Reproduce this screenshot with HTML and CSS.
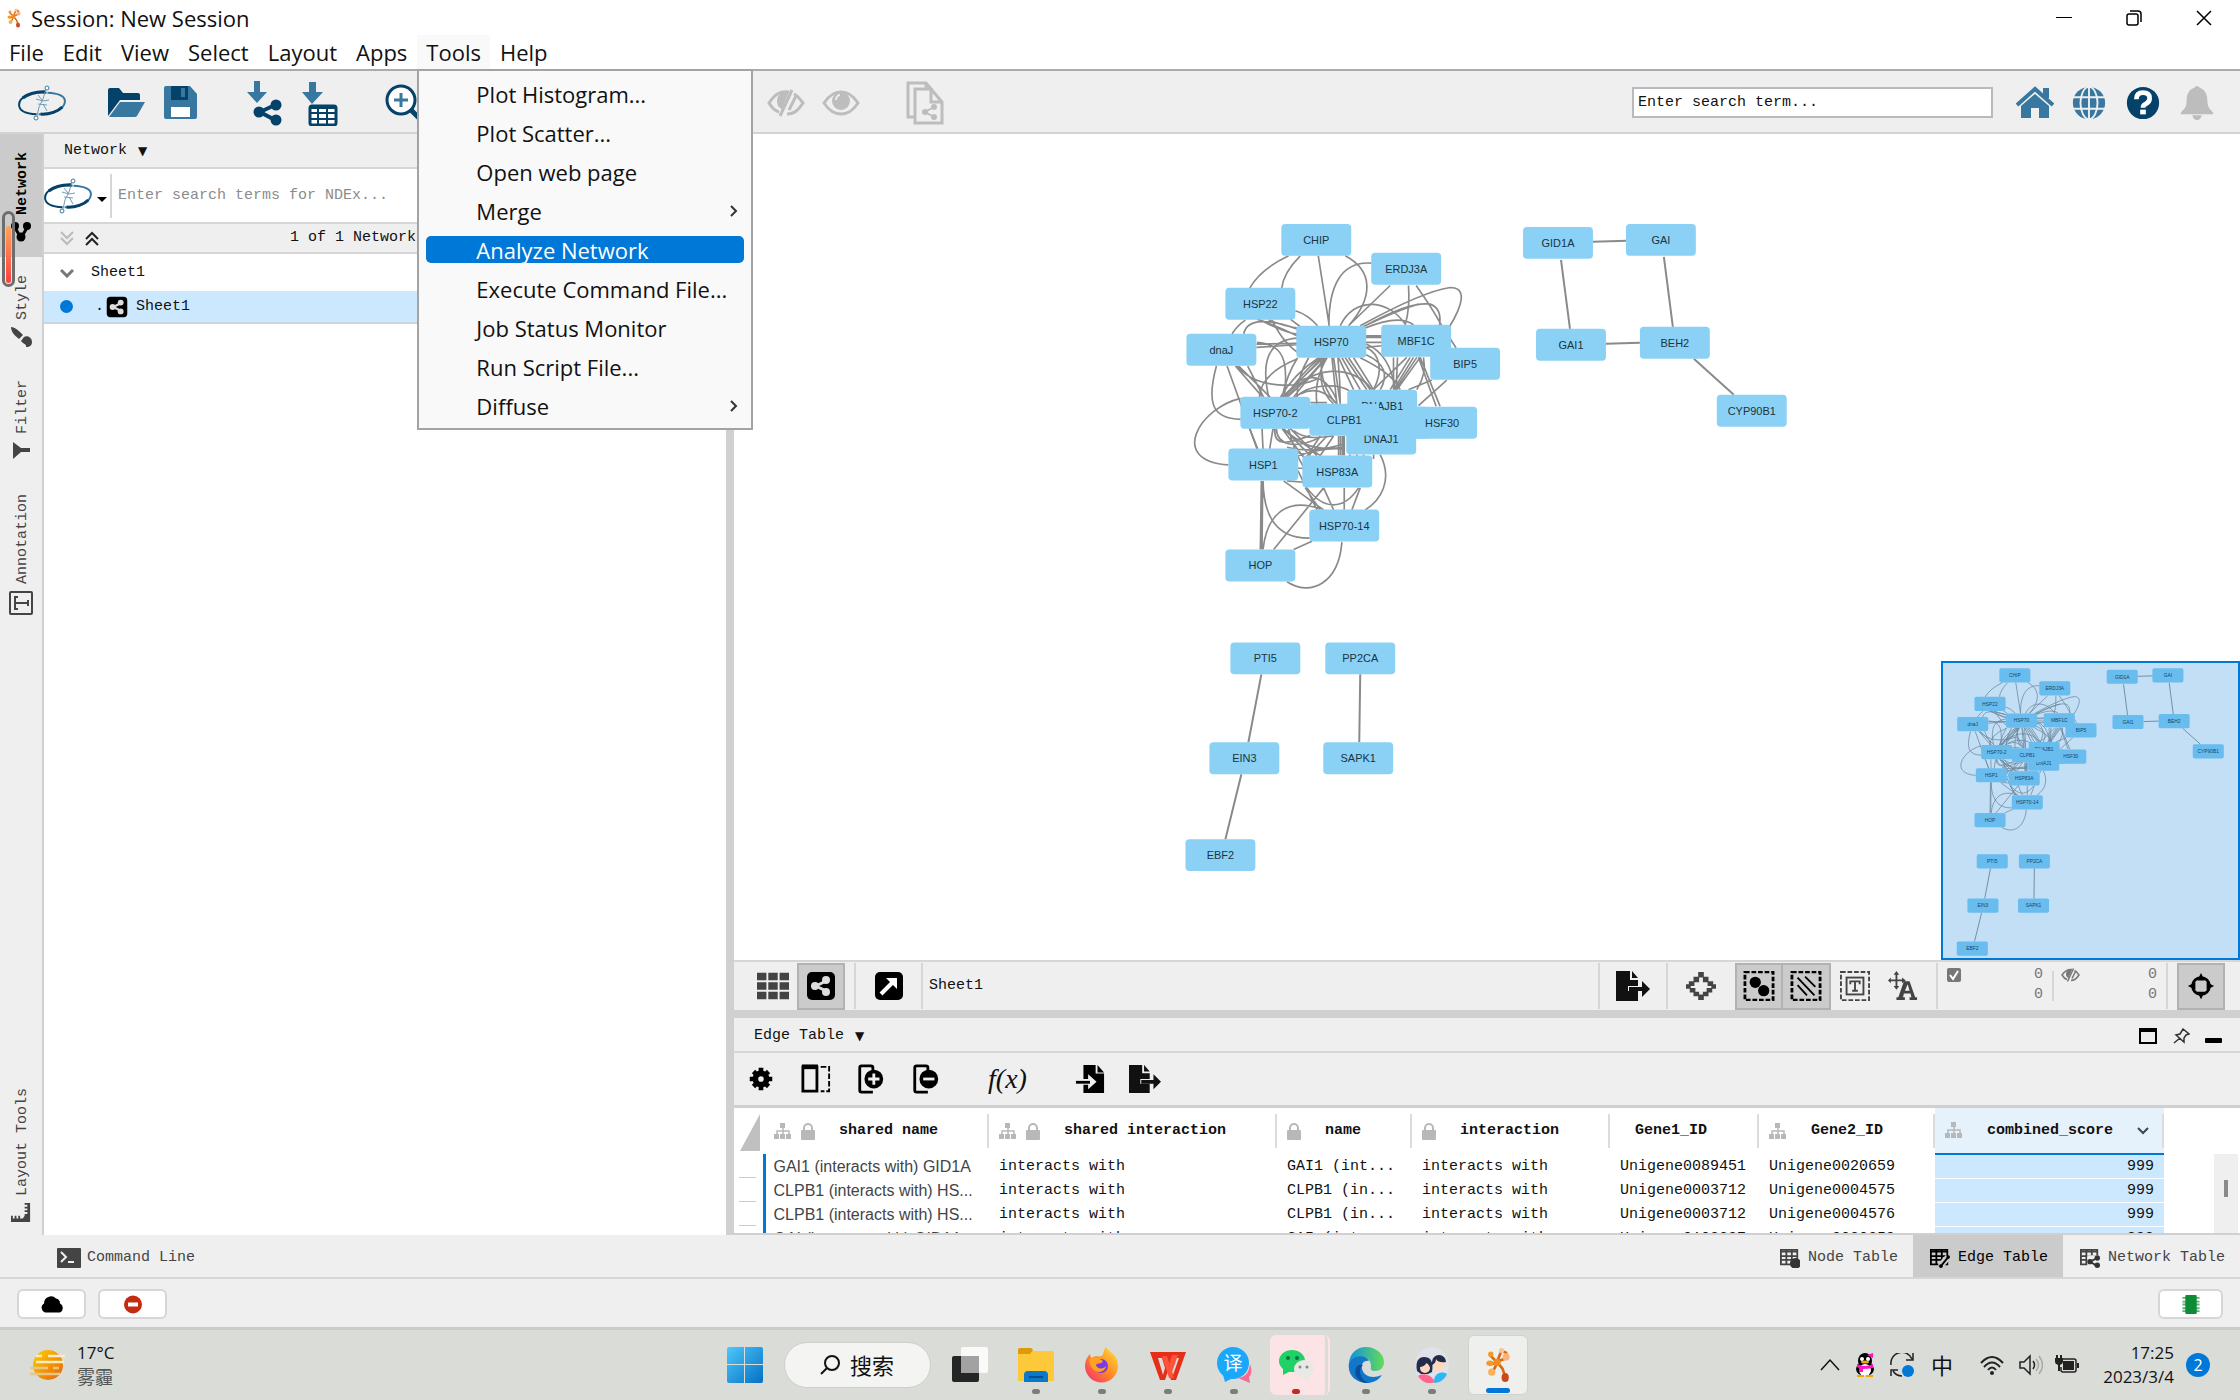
FILE: index.html
```html
<!DOCTYPE html>
<html lang="en">
<head>
    <meta charset="UTF-8">
    <meta name="viewport" content="width=device-width, initial-scale=1.0">
    <title>Session: New Session</title>
    <link rel="stylesheet" href="styles.css">
</head>
<body>
    <!-- shared icons -->
    <svg class="defs" width="0" height="0" aria-hidden="true">
        <symbol id="i-ndex" viewBox="0 0 48 40">
            <g transform="rotate(-3 24 20)">
                <path d="M29 10C14 7 1 13 1 21c0 6 8 9 17 10" fill="none" stroke="#05426a" stroke-width="2"/>
                <path d="M28 9C18 8 9 11 5 14" fill="none" stroke="#05426a" stroke-width="3"/>
                <path d="M30 10c10 1 17 4 17 9 0 8-13 13-27 12" fill="none" stroke="#3878a0" stroke-width="2"/>
                <path d="M22 31c9 1 18-2 22-6" fill="none" stroke="#05426a" stroke-width="3"/>
            </g>
            <path d="M28 6l-3 10-4 8-2 9M18 16l7 2 6-1M20 21l9 1M24 17l-4-5M25 21l4 7" fill="none" stroke="#6f9cb8" stroke-width="1"/>
            <circle cx="29" cy="5" r="2" fill="#fff" stroke="#3878a0"/>
            <circle cx="18" cy="35" r="2" fill="#fff" stroke="#3878a0"/>
        </symbol>
        <symbol id="i-share-box" viewBox="0 0 30 30">
            <rect x="1" y="1" width="28" height="28" rx="5" fill="#000"/>
            <path d="M20 10l-10 5 10 5" fill="none" stroke="#ddd" stroke-width="3"/>
            <circle cx="20" cy="9" r="4" fill="#ddd"/><circle cx="9" cy="15" r="4" fill="#ddd"/><circle cx="20" cy="21" r="4" fill="#ddd"/>
        </symbol>
        <symbol id="i-eye" viewBox="0 0 38 28">
            <path d="M2 14C8 5 13 3 19 3s11 2 17 11c-6 9-11 11-17 11S8 23 2 14z" fill="none" stroke="currentColor" stroke-width="3"/>
            <ellipse cx="19" cy="12" rx="9" ry="9" fill="currentColor"/>
            <path d="M14 11c0-3 2-5 4-5" fill="none" stroke="#efefef" stroke-width="2"/>
        </symbol>
        <symbol id="i-eye-off" viewBox="0 0 38 28">
            <path d="M22 3C13 2 8 5 2 14c3 5 6 8 10 9M27 5c4 2 6 5 9 9-6 9-10 11-16 11" fill="none" stroke="currentColor" stroke-width="3"/>
            <path d="M22 3c-8 0-12 3-12 9 0 4 2 7 5 8z" fill="currentColor"/>
            <path d="M25 1L13 27M29 7l-7 14" stroke="currentColor" stroke-width="3"/>
        </symbol>
        <symbol id="i-lock" viewBox="0 0 14 17">
            <rect y="7" width="14" height="10" rx="1" fill="#b8b8b8"/>
            <path d="M3 8V5a4 4 0 0 1 8 0v3" fill="none" stroke="#b8b8b8" stroke-width="2"/>
        </symbol>
        <symbol id="i-tree" viewBox="0 0 18 17">
            <path d="M9 4v8M3 12V8h12v4" fill="none" stroke="#b8b8b8" stroke-width="1.5"/>
            <path d="M6 0h5v5H6zM0 11h5v5H0zM6 11h5v5H6zM12 11h5v5h-5z" fill="#b8b8b8"/>
        </symbol>
        <symbol id="i-table" viewBox="0 0 22 22">
            <path d="M1 2h18v16H1z" fill="none" stroke="currentColor" stroke-width="2"/>
            <path d="M1 4h18M1 9h18M1 13h18M7 2v16M13 2v16" stroke="currentColor" stroke-width="2"/>
        </symbol>
        <symbol id="i-export" viewBox="0 0 34 30">
            <path d="M0 0h14v9h8v6h-10v5h10v10H0z" fill="currentColor"/><path d="M16 0l6 7h-6z" fill="currentColor"/>
            <path d="M13 16h13v-6l8 8-8 8v-6H13z" fill="currentColor"/>
        </symbol>
        <symbol id="i-cyto" viewBox="0 0 28 40">
            <path d="M13 16L18 4M18 4l6 3M13 16l9-3 2-6M13 17L5 9M13 17L4 20M13 18L7 30M14 18l5 6 3 9" fill="none" stroke="#d9690f" stroke-width="3"/>
            <circle cx="18" cy="4" r="3" fill="#f9c19a"/><circle cx="23" cy="11" r="4" fill="#fbb27f"/><circle cx="6" cy="8" r="3" fill="#f49a2b"/><ellipse cx="5" cy="18" rx="4" ry="3" fill="#f49a2b"/><circle cx="13" cy="17" r="4" fill="#f28b22"/><ellipse cx="7" cy="28" rx="4" ry="4" fill="#fbb15a"/><ellipse cx="22" cy="34" rx="4" ry="5" fill="#c9491a"/>
        </symbol>
    </svg>

    <header class="titlebar">
        <svg class="title-icon" viewBox="0 0 28 40"><use href="#i-cyto"/></svg>
        <h1 class="title">Session: New Session</h1>
        <div class="window-buttons">
            <button class="window-button" aria-label="Minimize"><svg viewBox="0 0 16 16"><path d="M0 7.500h16" stroke="#000" stroke-width="1"/></svg></button>
            <button class="window-button" aria-label="Restore"><svg viewBox="0 0 16 16"><rect x="1" y="4" width="11" height="11" rx="2" fill="none" stroke="#000" stroke-width="1.5"/><path d="M4 1h8q3 0 3 3v8" fill="none" stroke="#000" stroke-width="1.5"/></svg></button>
            <button class="window-button" aria-label="Close"><svg viewBox="0 0 16 16"><path d="M1 1l14 14M15 1L1 15" stroke="#000" stroke-width="1.5"/></svg></button>
        </div>
    </header>

    <nav class="menubar">
        <button class="menu-title">File</button>
        <button class="menu-title">Edit</button>
        <button class="menu-title">View</button>
        <button class="menu-title">Select</button>
        <button class="menu-title">Layout</button>
        <button class="menu-title">Apps</button>
        <div class="menu-holder">
            <button class="menu-title open">Tools</button>
            <div class="menu">
                <button class="menu-item">Plot Histogram...</button>
                <button class="menu-item">Plot Scatter...</button>
                <button class="menu-item">Open web page</button>
                <button class="menu-item">Merge<svg class="arrow" viewBox="0 0 8 12"><path d="M1 1l5 5-5 5" fill="none" stroke="#333" stroke-width="2"/></svg></button>
                <button class="menu-item active">Analyze Network</button>
                <button class="menu-item">Execute Command File...</button>
                <button class="menu-item">Job Status Monitor</button>
                <button class="menu-item">Run Script File...</button>
                <button class="menu-item">Diffuse<svg class="arrow" viewBox="0 0 8 12"><path d="M1 1l5 5-5 5" fill="none" stroke="#333" stroke-width="2"/></svg></button>
            </div>
        </div>
        <button class="menu-title">Help</button>
    </nav>

    <div class="toolbar">
        <button class="tool tool-logo" aria-label="NDEx"><svg viewBox="0 0 48 40"><use href="#i-ndex"/></svg></button>
        <div class="tools tools-file">
            <button class="tool" aria-label="Open"><svg viewBox="0 0 38 44"><path d="M1 35V9q0-2 2-2h9l4 5h15q2 0 2 2v5H13z" fill="#05426a"/><path d="M13 21h25l-8 14q-1 1-2 1H2z" fill="#3878a0"/></svg></button>
            <button class="tool" aria-label="Save"><svg viewBox="0 0 38 44"><path d="M4 5h24l7 8v23q0 2-2 2H4q-2 0-2-2V7q0-2 2-2z" fill="#3878a0"/><path d="M9 5h17v14H9z" fill="#05426a"/><path d="M19 7h4v9h-4z" fill="#3878a0"/><path d="M9 26h19v10H9z" fill="#fff"/></svg></button>
        </div>
        <div class="tools">
            <button class="tool" aria-label="Import network"><svg viewBox="0 0 38 46"><path d="M8 1h6v11h7L11 23 1 12h7z" fill="#3878a0"/><path d="M29 25L14 32l15 8" fill="none" stroke="#05426a" stroke-width="4"/><circle cx="30" cy="25" r="5.500" fill="#05426a"/><circle cx="13" cy="32" r="5.500" fill="#05426a"/><circle cx="30" cy="40" r="5.500" fill="#05426a"/></svg></button>
            <button class="tool" aria-label="Import table"><svg viewBox="0 0 38 46"><path d="M8 2h7v10h7L11 24 1 12h7z" fill="#3878a0"/><rect x="9" y="26" width="26" height="19" rx="2" fill="#fff" stroke="#05426a" stroke-width="3"/><path d="M9 28h26M9 33h26M9 39h26M17 26v19M26 26v19" stroke="#05426a" stroke-width="2"/></svg></button>
        </div>
        <div class="tools">
            <button class="tool" aria-label="Zoom in"><svg viewBox="0 0 38 44"><circle cx="16" cy="19" r="14" fill="#fff" stroke="#05426a" stroke-width="3"/><path d="M9 19h14M16 12v14" stroke="#3878a0" stroke-width="3"/><path d="M26 29l10 10" stroke="#05426a" stroke-width="5"/></svg></button>
            <button class="tool" aria-label="Zoom out"></button>
            <button class="tool" aria-label="Fit content"></button>
            <button class="tool" aria-label="Fit selected"></button>
            <button class="tool" aria-label="Apply layout"></button>
        </div>
        <div class="tools tools-view">
            <button class="tool" aria-label="First neighbors" disabled><svg viewBox="0 0 38 28"><path d="M30 8l6 12M30 22V6" fill="none" stroke="currentColor" stroke-width="3"/></svg></button>
            <button class="tool" aria-label="Hide selected" disabled><svg viewBox="0 0 38 28"><use href="#i-eye-off"/></svg></button>
            <button class="tool" aria-label="Show all" disabled><svg viewBox="0 0 38 28"><use href="#i-eye"/></svg></button>
        </div>
        <div class="tools">
            <button class="tool" aria-label="New network from selection" disabled><svg viewBox="0 0 38 44"><path d="M8 36H2V2h18l6 7M20 2v6" fill="none" stroke="currentColor" stroke-width="3"/><path d="M9 8h16l11 13v21H9zM25 8v13h11" fill="none" stroke="currentColor" stroke-width="3"/><path d="M28 26l-9 5 9 5" fill="none" stroke="currentColor" stroke-width="2"/><circle cx="28" cy="26" r="3" fill="currentColor"/><circle cx="19" cy="31" r="3" fill="currentColor"/><circle cx="28" cy="36" r="3" fill="currentColor"/></svg></button>
        </div>
        <input class="search" type="text" value="Enter search term..." aria-label="Search network">
        <div class="tools tools-help">
            <button class="tool" aria-label="Home"><svg viewBox="0 0 38 34"><path d="M27 2h6v10h-6z" fill="#3878a0"/><path d="M1 19L19 3l18 16" fill="none" stroke="#3878a0" stroke-width="4"/><path d="M5 20L19 8l14 12v12H23V22h-8v10H5z" fill="#3878a0"/></svg></button>
            <button class="tool" aria-label="Website"><svg viewBox="0 0 38 38"><circle cx="19" cy="19" r="17" fill="#3878a0"/><path d="M2 13h34M2 25h34M19 2v34" stroke="#efefef" stroke-width="2"/><ellipse cx="19" cy="19" rx="9" ry="17" fill="none" stroke="#efefef" stroke-width="2"/></svg></button>
            <button class="tool" aria-label="Help"><svg viewBox="0 0 38 38"><circle cx="19" cy="19" r="17" fill="#05426a"/><path d="M12 15q0-7 7-7t7 6q0 4-4 6-3 1-3 4" fill="none" stroke="#fff" stroke-width="5"/><rect x="16" y="26" width="6" height="5" fill="#fff"/></svg></button>
            <button class="tool" aria-label="Notifications" disabled><svg viewBox="0 0 38 38"><path d="M16 3q3-4 6 0c6 2 8 8 8 14 0 7 3 9 6 12v2H2v-2c3-3 6-5 6-12 0-6 2-12 8-14z" fill="currentColor"/><path d="M14 32h10q-1 5-5 5t-5-5z" fill="currentColor"/></svg></button>
        </div>
    </div>

    <main class="workspace">
        <div class="side-tabs">
            <button class="side-tab active"><span class="side-label">Network</span><svg viewBox="0 0 22 20"><path d="M4 4l7 12 7-12" fill="none" stroke="#000" stroke-width="3"/><circle cx="5" cy="4" r="4"/><circle cx="17" cy="4" r="4"/><circle cx="11" cy="15" r="4.500"/></svg></button>
            <button class="side-tab"><span class="side-label">Style</span><svg viewBox="0 0 22 20"><path d="M1 0c4 0 8 4 12 8l-4 4C5 9 1 5 1 0z" fill="#444"/><path d="M14 10c4-2 8 1 8 5 0 3-2 5-6 5 1-3-3-3-5-6z" fill="#444"/></svg></button>
            <button class="side-tab"><span class="side-label">Filter</span><svg viewBox="0 0 22 20"><path d="M3 1l8 6h9v4h-9l-8 7z" fill="#444"/></svg></button>
            <button class="side-tab"><span class="side-label">Annotation</span><svg class="tall" viewBox="0 0 24 24"><rect x="1" y="1" width="22" height="22" rx="1" fill="none" stroke="#444" stroke-width="2"/><path d="M6 6v12M6 12h13M19 9v6M5 6h4M5 18h4" fill="none" stroke="#444" stroke-width="2"/></svg></button>
            <button class="side-tab last"><span class="side-label">Layout Tools</span><svg viewBox="0 0 22 22"><path d="M21 0v21H0v-7h2v3h2v-3h2v3h2v-3h2v3h3l2-3v-2h3v-2h-3V8h3V6h-3V4h3V2h-3V0z" fill="#444"/></svg></button>
            <div class="level"><div class="level-fill"></div></div>
        </div>

        <section class="network-panel">
            <button class="panel-title">Network <span class="caret">▼</span></button>
            <div class="ndex-search">
                <svg class="ndex-logo" viewBox="0 0 48 40"><use href="#i-ndex"/></svg>
                <svg class="ndex-caret" viewBox="0 0 10 5"><path d="M0 0h10L5 5z"/></svg>
                <input class="ndex-input" type="text" placeholder="Enter search terms for NDEx..." aria-label="NDEx search">
            </div>
            <div class="network-info">
                <svg viewBox="0 0 15 15"><path d="M1 1l6 6 6-6M1 7l6 6 6-6" fill="none" stroke="#bbb" stroke-width="2"/></svg>
                <svg viewBox="0 0 15 15"><path d="M1 8l6-6 6 6M1 14l6-6 6 6" fill="none" stroke="#222" stroke-width="2"/></svg>
                <span class="network-count">1 of 1 Network</span>
            </div>
            <div class="tree-row">
                <svg class="tree-chevron" viewBox="0 0 14 10"><path d="M1 2l6 6 6-6" fill="none" stroke="#777" stroke-width="3"/></svg>
                <span>Sheet1</span>
            </div>
            <div class="tree-row selected">
                <span class="dot"></span>
                <span class="edge-mark">.</span>
                <svg class="tree-icon" viewBox="0 0 30 30"><use href="#i-share-box"/></svg>
                <span>Sheet1</span>
            </div>
        </section>

        <div class="content">
            <div class="stage">
                <svg class="graph" viewBox="-1 -1 1506 827" preserveAspectRatio="xMinYMin meet">
                    <defs><rect id="box" x="-35" y="-16" width="70" height="32" rx="4" fill="#8ad1f5"/></defs>
                    <g id="network">
                        <g class="edges" transform="translate(426 66) scale(.3333)">
                            <path d="M474 165L507 375M385 165Q300 205 268 262M420 165Q370 215 364 262M555 165C640 210 640 290 565 375M690 254L565 375M634 187C540 180 505 260 506 375"/>
                            <path d="M745 254Q750 320 735 373M768 254Q815 320 845 375M600 375C700 320 800 270 870 260C920 260 910 310 868 378M605 380C700 330 760 305 810 310C840 320 842 350 838 375M540 375C580 290 680 290 735 370M615 382C680 355 730 350 760 372M608 378Q720 325 775 310"/>
                            <path d="M615 405H665M615 410H665M615 425H665M615 440L665 435M868 410L888 442"/>
                            <path d="M405 330Q440 340 472 375M390 355L420 378M290 355Q350 375 410 405M335 358Q370 430 420 460M325 358Q370 375 410 382M255 358Q230 375 215 399M410 385C330 355 260 350 250 399M300 358Q370 395 410 400"/>
                            <path d="M288 430L410 428M288 440L410 432M290 425C370 430 385 480 372 590M168 496C140 600 150 655 241 656M200 496L290 745M225 496L305 587M235 496L330 590M230 496C290 570 420 560 470 535M262 496Q290 550 310 590"/>
                            <path d="M410 412C300 420 310 520 325 590M410 475Q300 520 297 590M490 471L365 590M485 471L370 590M480 471Q420 520 375 590M475 471Q400 520 360 590M495 471Q450 530 380 590M500 471Q420 560 400 590M412 471Q380 520 365 590M445 471Q410 530 410 590"/>
                            <path d="M515 471L530 610M520 471L540 610M533 471Q540 540 540 610M500 471Q460 540 470 610M490 471Q465 560 520 610M482 471Q480 560 530 610M410 545Q490 500 530 600"/>
                            <path d="M535 471L580 567M545 471L600 567M555 471L620 567M565 471L630 567M580 471L640 567M600 471Q700 520 720 567M618 440C660 460 670 510 640 567M618 462Q700 500 660 567M618 430Q690 460 705 567"/>
                            <path d="M700 470V567M712 470L708 567M740 470L640 567M750 470L690 567M760 470L700 567M770 470L705 567M780 470L710 567M790 470Q800 520 770 567M780 470L840 617M775 470L828 617M815 538L745 567M860 538L775 615"/>
                            <path d="M380 590C450 490 580 490 635 567M405 590C450 545 540 550 570 572M450 606H500M420 580Q480 550 530 610"/>
                            <path d="M268 684L292 745M305 684L308 745M338 684L328 745M343 684C340 740 380 730 450 705M348 684C350 730 400 750 480 710M365 684L430 770M370 684L450 765M365 684L480 765M380 690C420 740 480 750 550 740M400 690C440 720 480 710 520 706M385 684Q400 750 430 800M380 740Q450 760 550 730M400 770Q480 740 550 745M390 684L470 765"/>
                            <path d="M241 593C120 620 20 780 204 793M535 706V765M541 706V765M547 706V765M552 706V765M480 706L435 775M500 706L445 765M520 706L480 765M570 762L560 790M590 762V790M610 762V780M640 762V775M413 803H430M413 755L430 765"/>
                            <path d="M660 762C700 840 660 900 615 928M308 841C310 950 350 1015 448 1013M303 841L300 1047M307 841L305 1047M370 841L490 928M380 841L430 845M413 810L470 928M435 862L480 928M490 862L340 1047M490 862L520 928M552 862V928M600 862L575 928M440 862C490 930 550 930 595 862M480 925C380 890 320 940 308 1047M400 1047L455 1022M545 1025C535 1150 450 1190 380 1144"/>
                        </g>
                        <g class="edges thin">
                            <path d="M859 107l34-1M827 125l9 69M930 122l9 70M872 209l34-1M960 224l40 36M527 540l-13 68M507 640l-16 65M626 540l-1 68"/>
                        </g>
                        <g class="nodes">
                            <use href="#box" x="582" y="105"/><text x="582" y="109">CHIP</text>
                            <use href="#box" x="672" y="134"/><text x="672" y="138">ERDJ3A</text>
                            <use href="#box" x="526" y="169"/><text x="526" y="173">HSP22</text>
                            <use href="#box" x="487" y="215"/><text x="487" y="219">dnaJ</text>
                            <use href="#box" x="597" y="207"/><text x="597" y="211">HSP70</text>
                            <use href="#box" x="682" y="206"/><text x="682" y="210">MBF1C</text>
                            <use href="#box" x="731" y="229"/><text x="731" y="233">BIP5</text>
                            <use href="#box" x="660" y="288"/>
                            <use href="#box" x="708" y="288"/><text x="708" y="292">HSF30</text>
                            <use href="#box" x="648" y="271"/><text x="648" y="275">DNAJB1</text>
                            <use href="#box" x="647" y="304"/><text x="647" y="308">DNAJ1</text>
                            <use href="#box" x="541" y="278"/><text x="541" y="282">HSP70-2</text>
                            <use href="#box" x="610" y="285"/><text x="610" y="289">CLPB1</text>
                            <use href="#box" x="529" y="330"/><text x="529" y="334">HSP1</text>
                            <use href="#box" x="603" y="337"/><text x="603" y="341">HSP83A</text>
                            <use href="#box" x="610" y="391"/><text x="610" y="395">HSP70-14</text>
                            <use href="#box" x="526" y="431"/><text x="526" y="435">HOP</text>
                            <use href="#box" x="824" y="108"/><text x="824" y="112">GID1A</text>
                            <use href="#box" x="927" y="105"/><text x="927" y="109">GAI</text>
                            <use href="#box" x="837" y="210"/><text x="837" y="214">GAI1</text>
                            <use href="#box" x="941" y="208"/><text x="941" y="212">BEH2</text>
                            <use href="#box" x="1018" y="276"/><text x="1018" y="280">CYP90B1</text>
                            <use href="#box" x="531" y="524"/><text x="531" y="528">PTI5</text>
                            <use href="#box" x="626" y="524"/><text x="626" y="528">PP2CA</text>
                            <use href="#box" x="510" y="624"/><text x="510" y="628">EIN3</text>
                            <use href="#box" x="624" y="624"/><text x="624" y="628">SAPK1</text>
                            <use href="#box" x="486" y="721"/><text x="486" y="725">EBF2</text>
                        </g>
                    </g>
                </svg>
                <div class="overview">
                    <svg viewBox="420 77 665 665"><use href="#network"/></svg>
                </div>
            </div>

            <div class="view-bar">
                <button class="view-button" aria-label="Grid view"><svg viewBox="0 0 34 28"><path d="M0 0h10v8H0zM12 0h10v8H12zM24 0h10v8H24zM0 10h10v8H0zM12 10h10v8H12zM24 10h10v8H24zM0 20h10v8H0zM12 20h10v8H12zM24 20h10v8H24z" fill="#444"/></svg></button>
                <button class="view-button pressed" aria-label="Network view"><svg viewBox="0 0 30 30"><use href="#i-share-box"/></svg></button>
                <span class="bar-line"></span>
                <button class="view-button" aria-label="Detach view"><svg viewBox="0 0 30 30"><rect x="1" y="1" width="28" height="28" rx="5"/><path d="M7 23L19 11" stroke="#fff" stroke-width="4"/><path d="M12 7h11v11z" fill="#fff"/></svg></button>
                <span class="bar-line tight"></span>
                <span class="view-name">Sheet1</span>
                <span class="bar-line"></span>
                <button class="view-button" aria-label="Export"><svg class="wide" viewBox="0 0 34 30"><use href="#i-export"/></svg></button>
                <span class="bar-line"></span>
                <button class="view-button details" aria-label="Graphics details"><svg viewBox="0 0 32 32"><path d="M13 1h6v6h-6zM8 6h6v6H8zM18 6h6v6h-6zM3 11h6v5H3zM23 11h6v5h-6zM0 14h5v5H0zM27 14h5v5h-5zM4 18h6v5H4zM22 18h6v5h-6zM8 22h6v5H8zM18 22h6v5h-6zM13 25h6v6h-6z" fill="#444"/></svg></button>
                <button class="view-button pressed" aria-label="Select nodes"><svg viewBox="0 0 32 32"><rect x="1" y="1" width="30" height="30" fill="none" stroke="#000" stroke-width="3" stroke-dasharray="5 2"/><circle cx="12" cy="12" r="6"/><circle cx="21" cy="21" r="6"/></svg></button>
                <button class="view-button pressed joined" aria-label="Select edges"><svg viewBox="0 0 32 32"><rect x="1" y="1" width="30" height="30" fill="none" stroke="#000" stroke-width="3" stroke-dasharray="5 2"/><path d="M7 15l10 11M7 7l18 19M15 6l11 11" stroke="#000" stroke-width="2"/></svg></button>
                <button class="view-button" aria-label="Select annotations"><svg viewBox="0 0 32 32"><rect x="1" y="1" width="30" height="30" fill="none" stroke="#444" stroke-width="2" stroke-dasharray="5 2"/><rect x="7" y="7" width="18" height="18" fill="none" stroke="#444" stroke-width="2"/><path d="M11 14v-3h10v3M16 11v10M13 21h6" fill="none" stroke="#444" stroke-width="2"/></svg></button>
                <button class="view-button" aria-label="Move labels"><svg viewBox="0 0 32 32"><path d="M9 0l3 4h-2v5h5V7l4 3-4 3v-2h-5v5h2l-3 4-3-4h2v-5H3v2l-3-3 3-3v2h5V4H6z" fill="#444"/><path d="M9 31v-3h2l6-17h6l6 17h2v3h-8v-3h2l-1-4h-7l-1 4h2v3zm9-10h5l-2-7z" fill="#444"/></svg></button>
                <span class="bar-line"></span>
                <div class="counts">
                    <svg viewBox="0 0 19 14"><rect width="14" height="14" rx="2" fill="#777"/><path d="M3 7l3 4 5-8" fill="none" stroke="#fff" stroke-width="2"/></svg>
                    <span class="count">0<br>0</span>
                </div>
                <span class="bar-line short"></span>
                <div class="counts">
                    <svg class="muted" viewBox="0 0 38 28"><use href="#i-eye-off"/></svg>
                    <span class="count">0<br>0</span>
                </div>
                <span class="bar-line"></span>
                <button class="view-button pressed target" aria-label="Show overview"><svg viewBox="0 0 32 32"><circle cx="16" cy="16" r="9" fill="none" stroke="#000" stroke-width="3"/><path d="M16 2l4 8h-8zM16 30l4-8h-8zM2 16l8-4v8zM30 16l-8-4v8z"/></svg></button>
            </div>

            <section class="table-panel">
                <div class="table-title">
                    <button class="panel-title plain">Edge Table <span class="caret">▼</span></button>
                    <button class="dock-button" aria-label="Float"><svg viewBox="0 0 18 16"><path d="M0 0h18v16H0zM2 4v10h14V4z" fill-rule="evenodd"/></svg></button>
                    <button class="dock-button" aria-label="Pin"><svg viewBox="0 0 18 16"><path d="M11 1l6 5-3 1-2 3v4L4 7l4-1zM8 10l-6 5" fill="none" stroke="#333" stroke-width="1.500"/></svg></button>
                    <button class="dock-button" aria-label="Minimize panel"><svg viewBox="0 0 18 16"><rect y="10" width="17" height="5" rx="1"/></svg></button>
                </div>
                <div class="table-tools">
                    <button class="table-tool" aria-label="Table settings"><svg viewBox="0 0 32 32"><circle cx="16" cy="16" r="6" fill="none" stroke="#000" stroke-width="6"/><path d="M16 4v5M16 23v5M4 16h5M23 16h5M8 8l3 3M21 21l3 3M24 8l-3 3M8 24l3-3" stroke="#000" stroke-width="5"/></svg></button>
                    <button class="table-tool" aria-label="Show columns"><svg viewBox="0 0 32 32"><path d="M2 3h15v26H2z" fill="none" stroke="#000" stroke-width="3"/><path d="M1 3h17" stroke="#000" stroke-width="5"/><path d="M21 3h9v26h-9" fill="none" stroke="#000" stroke-width="2" stroke-dasharray="6 2"/></svg></button>
                    <button class="table-tool" aria-label="Add column"><svg viewBox="0 0 32 32"><path d="M18 30H6q-2 0-2-2V4q0-2 2-2h10q2 0 2 2v5" fill="none" stroke="#000" stroke-width="3"/><circle cx="19" cy="16" r="10"/><path d="M13 16h12M19 10v12" stroke="#efefef" stroke-width="3"/></svg></button>
                    <button class="table-tool" aria-label="Delete column"><svg viewBox="0 0 32 32"><path d="M18 30H6q-2 0-2-2V4q0-2 2-2h10q2 0 2 2v5" fill="none" stroke="#000" stroke-width="3"/><circle cx="19" cy="16" r="10"/><path d="M13 16h12" stroke="#efefef" stroke-width="3"/></svg></button>
                    <button class="table-tool function">f(x)</button>
                    <button class="table-tool" aria-label="Import table"><svg viewBox="0 0 32 32"><path d="M9 1h13v9h9v21H9v-9h5v5l9-8-9-8v5H9z"/><path d="M24 1l7 8h-7z"/><path d="M1 18h15v3H1z"/></svg></button>
                    <button class="table-tool" aria-label="Export table"><svg class="wide" viewBox="0 0 34 30"><use href="#i-export"/></svg></button>
                </div>
                <div class="table-wrap">
                    <table class="edge-table">
                        <colgroup>
                            <col class="c-corner"><col class="c-shared-name"><col class="c-shared-int"><col class="c-name"><col class="c-int"><col class="c-gene1"><col class="c-gene2"><col class="c-score"><col>
                        </colgroup>
                        <thead>
                            <tr>
                                <td class="corner"><svg viewBox="0 0 20 37"><path d="M20 0v37H0z" fill="#c0c0c0"/></svg></td>
                                <th><div class="head"><svg class="tree" viewBox="0 0 18 17"><use href="#i-tree"/></svg><svg viewBox="0 0 14 17"><use href="#i-lock"/></svg><span>shared name</span></div></th>
                                <th><div class="head"><svg class="tree" viewBox="0 0 18 17"><use href="#i-tree"/></svg><svg viewBox="0 0 14 17"><use href="#i-lock"/></svg><span>shared interaction</span></div></th>
                                <th><div class="head"><svg viewBox="0 0 14 17"><use href="#i-lock"/></svg><span>name</span></div></th>
                                <th><div class="head"><svg viewBox="0 0 14 17"><use href="#i-lock"/></svg><span>interaction</span></div></th>
                                <th><div class="head no-icon"><span>Gene1_ID</span></div></th>
                                <th><div class="head"><svg class="tree" viewBox="0 0 18 17"><use href="#i-tree"/></svg><span>Gene2_ID</span></div></th>
                                <th class="sorted"><div class="head"><svg class="tree" viewBox="0 0 18 17"><use href="#i-tree"/></svg><span>combined_score</span><svg class="sort" viewBox="0 0 12 8"><path d="M1 1l5 5 5-5" fill="none" stroke="#444" stroke-width="2"/></svg></div></th>
                                <td></td>
                            </tr>
                        </thead>
                        <tbody>
                            <tr><td class="handle"></td><td class="edge-name">GAI1 (interacts with) GID1A</td><td>interacts with</td><td>GAI1 (int...</td><td>interacts with</td><td>Unigene0089451</td><td>Unigene0020659</td><td class="score">999</td><td></td></tr>
                            <tr><td class="handle"></td><td class="edge-name">CLPB1 (interacts with) HS...</td><td>interacts with</td><td>CLPB1 (in...</td><td>interacts with</td><td>Unigene0003712</td><td>Unigene0004575</td><td class="score">999</td><td></td></tr>
                            <tr><td class="handle"></td><td class="edge-name">CLPB1 (interacts with) HS...</td><td>interacts with</td><td>CLPB1 (in...</td><td>interacts with</td><td>Unigene0003712</td><td>Unigene0004576</td><td class="score">999</td><td></td></tr>
                            <tr><td class="handle"></td><td class="edge-name">GAI (interacts with) GID1A</td><td>interacts with</td><td>GAI (inte...</td><td>interacts with</td><td>Unigene0102337</td><td>Unigene0030659</td><td class="score">999</td><td></td></tr>
                        </tbody>
                    </table>
                    <div class="scroll-track"><div class="scroll-thumb"></div></div>
                </div>
            </section>
        </div>
    </main>

    <div class="bottom-tabs">
        <button class="bottom-tab command"><svg class="console" viewBox="0 0 24 20"><rect width="24" height="20" rx="1" fill="#444"/><path d="M4 4l5 5-5 5M11 14h6" fill="none" stroke="#efefef" stroke-width="2"/></svg>Command Line</button>
        <button class="bottom-tab"><svg viewBox="0 0 22 22"><use href="#i-table"/><circle cx="17" cy="17" r="6" fill="#333"/></svg>Node Table</button>
        <button class="bottom-tab active"><svg viewBox="0 0 22 22"><use href="#i-table"/><path d="M11 20L20 10" stroke="#cbcbcb" stroke-width="7"/><path d="M12 20L20 10" stroke="#000" stroke-width="2"/><circle cx="12" cy="20" r="2"/><circle cx="20" cy="10" r="2"/></svg>Edge Table</button>
        <button class="bottom-tab"><svg viewBox="0 0 22 22"><use href="#i-table"/><rect x="8" y="8" width="14" height="14" fill="#efefef"/><path d="M19 11l-8 4 8 5" fill="none" stroke="#333" stroke-width="2"/><circle cx="19" cy="11" r="3" fill="#333"/><circle cx="11" cy="15" r="3" fill="#333"/><circle cx="19" cy="19" r="3" fill="#333"/></svg>Network Table</button>
    </div>

    <footer class="statusbar">
        <button class="status-button" aria-label="Cloud"><svg viewBox="0 0 24 18"><path d="M5 17a5 5 0 0 1-1-9 7 7 0 0 1 12-5 5 5 0 0 1 4 5 5 5 0 0 1 0 9z"/></svg></button>
        <button class="status-button" aria-label="Task status"><svg viewBox="0 0 24 18"><circle cx="12" cy="9" r="9" fill="#c42b10"/><rect x="7" y="7" width="10" height="4" fill="#fff"/></svg></button>
        <button class="status-button right" aria-label="Memory"><svg viewBox="0 0 24 20"><path d="M3 3h18M3 7h18M3 10h18M3 14h18M3 17h18" stroke="#5cb078" stroke-width="2"/><rect x="6" width="12" height="20" rx="1" fill="#0d8b35"/></svg></button>
    </footer>

    <div class="taskbar">
        <div class="weather">
            <svg class="sun" viewBox="0 0 36 32">
                <defs><linearGradient id="sun" x1="0" y1="0" x2="1" y2="1"><stop offset="0" stop-color="#fdd100"/><stop offset="1" stop-color="#ea5f0c"/></linearGradient></defs>
                <circle cx="18" cy="16" r="15" fill="url(#sun)"/><path d="M6 7h6M18 7h17M6 13h28" stroke="#fbedc0" stroke-width="2.500"/><path d="M0 19h18M23 19h6M0 25h30" stroke="#e5c685" stroke-width="2.500"/>
            </svg>
            <div class="weather-text"><span>17°C</span><span class="weather-sky" lang="zh">雾霾</span></div>
        </div>
        <div class="apps">
            <button class="app" aria-label="Start"><svg viewBox="0 0 36 36"><defs><linearGradient id="win" x1="0" y1="0" x2="1" y2="1"><stop offset="0" stop-color="#4cc8fb"/><stop offset="1" stop-color="#0570c4"/></linearGradient></defs><path d="M2 0h15v17H0V2q0-2 2-2zM18 0h16q2 0 2 2v15H18zM0 18h17v18H2q-2 0-2-2zM18 18h18v16q0 2-2 2H18z" fill="url(#win)"/></svg></button>
            <button class="find" lang="zh"><svg viewBox="0 0 20 20"><circle cx="12" cy="8" r="7" fill="none" stroke="#111" stroke-width="2"/><path d="M7 13l-6 6" stroke="#111" stroke-width="2"/></svg>搜索</button>
            <button class="app" aria-label="Task view"><svg viewBox="0 0 36 36"><rect y="9" width="27" height="26" rx="2" fill="#252525"/><rect x="9" width="27" height="26" rx="2" fill="#fafafa"/><rect x="9" y="9" width="18" height="17" fill="#a2a2a2"/></svg></button>
            <button class="app running" aria-label="File Explorer"><svg viewBox="0 0 36 36"><path d="M0 3q0-2 2-2h11l3 3H34q2 0 2 2v28H0z" fill="#fdc93a"/><path d="M0 3q0-2 2-2h11l2 2-3 4H0z" fill="#dd9a0b"/><path d="M6 35V28q0-4 4-4h16q4 0 4 4v7z" fill="#0a79c9"/><path d="M11 30h14" stroke="#044f91" stroke-width="2"/></svg></button>
            <button class="app running" aria-label="Firefox"><svg viewBox="0 0 36 36"><defs><linearGradient id="fox" x1="1" y1="0" x2="0" y2="1"><stop offset="0" stop-color="#ffe63c"/><stop offset=".5" stop-color="#ff8a24"/><stop offset="1" stop-color="#f4257a"/></linearGradient></defs><path d="M22 0c3 6 12 7 12 19a16 16 0 0 1-33 0C1 14 3 10 6 7l1 4 5-2c3 1 7 0 7-2 1-3 1-5 3-7z" fill="url(#fox)"/><circle cx="17" cy="19" r="7" fill="#7a3be0"/><path d="M5 12c7-3 11 0 14 2-2 4-6 1-7 4 1 4 6 5 10 1-1 8-15 10-17-7z" fill="#ffa221"/></svg></button>
            <button class="app running" aria-label="WPS Office"><svg viewBox="0 0 36 36"><path d="M0 5h36L26 33h-5l-3-9-3 9h-5z" fill="#e62e19"/><path d="M8 11h4l3 10-2 7zM21 11h8l-6 17-2-6z" fill="#dadcd7"/><path d="M12 9h5l7 22h-5zM22 8h6l-7 20-3-7z" fill="#ff5238"/></svg></button>
            <button class="app running" aria-label="Translate" lang="zh"><svg viewBox="0 0 36 36"><path d="M22 31c8-1 11-6 12-14 2 5 2 11-1 13l1 6z" fill="#f76b91"/><circle cx="17" cy="16" r="16" fill="#1ba7fa"/><path d="M7 28l2 7 10-5z" fill="#1ba7fa"/><text x="17" y="23" class="app-text">译</text></svg></button>
            <button class="app running wechat" aria-label="WeChat"><svg viewBox="0 0 36 36"><ellipse cx="14" cy="14" rx="13" ry="11" fill="#1fd166"/><path d="M5 21v7l8-4z" fill="#1fd166"/><circle cx="10" cy="11" r="2" fill="#08783a"/><circle cx="19" cy="11" r="2" fill="#08783a"/><ellipse cx="26" cy="22" rx="10" ry="9" fill="#e8e8e5"/><path d="M31 28v5l-6-3z" fill="#e8e8e5"/><circle cx="22" cy="20" r="1.500" fill="#888"/><circle cx="29" cy="20" r="1.500" fill="#888"/></svg></button>
            <button class="app running" aria-label="Microsoft Edge"><svg viewBox="0 0 36 36"><defs><linearGradient id="edge" x1="0" y1="0" x2="1" y2="0"><stop offset="0" stop-color="#1190dc"/><stop offset="1" stop-color="#64dc57"/></linearGradient></defs><path d="M1 16C2 6 9 0 18 0c10 0 18 7 18 15 0 6-4 9-9 9-3 0-5-1-4-4C24 9 10 7 1 16z" fill="url(#edge)"/><path d="M1 16c6-9 17-8 20-2-6-1-8 4-7 8 2 8 11 10 20 6-4 6-10 8-15 8C8 36-1 28 1 16z" fill="#1277c8"/><path d="M15 18c-5 4-4 13 5 18-9 0-15-8-12-15 1-3 4-4 7-3z" fill="#094f9e"/></svg></button>
            <button class="app running" aria-label="Contacts"><svg viewBox="0 0 36 36"><ellipse cx="18" cy="18" rx="17" ry="18" fill="#dfe2e8"/><circle cx="25" cy="18" r="6" fill="#ffd8c0"/><path d="M18 15a7 7 0 0 1 14 0q-8 1-10-3 0 4-4 6z" fill="#232c48"/><path d="M20 34c0-9 10-10 13-7-2 5-7 9-13 9z" fill="#2cb8f5"/><path d="M3 24c-2-10 2-14 7-14 6 0 10 4 8 15l-4 2H7z" fill="#242d4b"/><circle cx="11" cy="21" r="5" fill="#ffd8c0"/><path d="M5 20q6 0 8-5l3 5q0-8-5-8t-6 8z" fill="#242d4b"/><path d="M4 29c3-3 13-3 17 6-6 3-13 1-17-6z" fill="#ff688e"/></svg></button>
            <button class="app current" aria-label="Cytoscape"><svg viewBox="0 0 28 40"><use href="#i-cyto"/></svg></button>
        </div>
        <div class="tray">
            <svg viewBox="0 0 20 24"><path d="M1 17l9-10 9 10" fill="none" stroke="#111" stroke-width="1.500"/></svg>
            <svg viewBox="0 0 20 24"><ellipse cx="10" cy="8" rx="7" ry="8"/><ellipse cx="10" cy="16" rx="9" ry="7"/><ellipse cx="10" cy="17" rx="6" ry="6" fill="#fff"/><circle cx="7" cy="6" r="2" fill="#fff"/><circle cx="13" cy="6" r="2" fill="#fff"/><ellipse cx="10" cy="9" rx="4" ry="1.500" fill="#f5a400"/><path d="M2 11q8 4 16 0v4q-5 1-10 1v3H4v-4l-2-1zM12 2l6-2v5z" fill="#ff11c8"/><path d="M2 22h7v2H2zM11 22h7v2h-7z" fill="#f5a400"/></svg>
            <svg class="wide" viewBox="0 0 24 24"><path d="M1 12A11 11 0 0 1 22 6M23 0v7h-7M12 23A11 11 0 0 1 3 18M1 23v-6h7" fill="none" stroke="#222" stroke-width="1.500"/><circle cx="18" cy="18" r="6" fill="#0078d7"/></svg>
            <span class="ime" lang="zh">中</span>
            <svg class="wide wifi" viewBox="0 0 24 20"><path d="M1 8q11-12 22 0M4 12q8-9 16 0M8 15q4-5 8 0" fill="none" stroke="#222" stroke-width="2"/><circle cx="12" cy="18" r="2" fill="#222"/></svg>
            <svg class="wide" viewBox="0 0 24 20"><path d="M1 7h4l6-6v18l-6-6H1z" fill="none" stroke="#222" stroke-width="1.500"/><path d="M14 6q3 4 0 8" fill="none" stroke="#222" stroke-width="1.500"/><path d="M17 4q5 6 0 12M20 1q7 9 0 18" fill="none" stroke="#aaa" stroke-width="1.500"/></svg>
            <svg class="wide" viewBox="0 0 24 20"><path d="M8 4h11q2 0 2 2v9q0 2-2 2H8q-2 0-2-2v-3" fill="none" stroke="#222" stroke-width="1.500"/><path d="M8 6h11v9H8zM22 8h2v5h-2zM0 3h8v4q0 2-3 3v6H3v-6Q0 9 0 7zM1 0h2v3H1zM5 0h2v3H5z" fill="#222"/></svg>
            <div class="clock"><span>17:25</span><span>2023/3/4</span></div>
            <span class="badge">2</span>
        </div>
    </div>
</body>
</html>
```

FILE: styles.css
```css
* {
    box-sizing: border-box;
}

body {
    display: flex;
    flex-direction: column;
    height: 100vh;
    margin: 0;
    overflow: hidden;
    background-color: #efefef;
    color: #111;
    font-family: 'Liberation Mono', monospace;
    font-size: 15px;
    line-height: 20px;
}

button {
    display: flex;
    align-items: center;
    padding: 0;
    border: none;
    background: none;
    color: inherit;
    font: inherit;
    white-space: nowrap;
}

input {
    font: inherit;
    color: inherit;
}

svg {
    display: block;
    flex-shrink: 0;
}

.defs {
    position: absolute;
}

/* title bar and menus */
.titlebar {
    display: flex;
    align-items: center;
    height: 35px;
    flex-shrink: 0;
    padding-left: 5px;
    background-color: #fff;
    font-family: 'Open Sans', sans-serif;
}

.title-icon {
    width: 18px;
    height: 20px;
}

.title {
    flex: 1;
    margin: 0 0 0 8px;
    font-size: 22px;
    font-weight: normal;
    line-height: 30px;
}

.window-buttons {
    display: flex;
    gap: 54px;
    padding-right: 28px;
}

.window-button svg {
    width: 16px;
    height: 16px;
}

.menubar {
    display: flex;
    gap: 1px;
    height: 36px;
    flex-shrink: 0;
    border-bottom: 2px solid #ababab;
    background-color: #fff;
    font-family: 'Open Sans', sans-serif;
    font-size: 22px;
}

.menu-title {
    height: 34px;
    padding: 0 9px;
}

.menu-title.open {
    background-color: #f9f9f9;
}

.menu-holder {
    position: relative;
}

.menu {
    position: absolute;
    top: 34px;
    left: 0;
    z-index: 5;
    width: 336px;
    padding: 3px 7px;
    border: 2px solid #a3a3a3;
    background-color: #f9f9f9;
}

.menu-item {
    width: 100%;
    height: 27px;
    margin: 6px 0 12px;
    padding: 0 6px 0 50px;
    border-radius: 5px;
}

.menu-item:last-child {
    margin-bottom: 6px;
}

.menu-item.active {
    background-color: #0078d7;
    color: #fff;
}

.arrow {
    width: 8px;
    height: 12px;
    margin-left: auto;
}

/* main toolbar */
.toolbar {
    display: flex;
    align-items: center;
    height: 63px;
    flex-shrink: 0;
    padding: 2px 24px 0 18px;
    border-bottom: 2px solid #d3d3d3;
}

.tools {
    display: flex;
    align-items: center;
    gap: 17px;
    margin-left: 46px;
}

.tools-file {
    margin-left: 41px;
}

.tools-view {
    margin-left: 69px;
}

.tool {
    justify-content: center;
    width: 38px;
    height: 46px;
}

.tool-logo {
    width: 48px;
}

.tool svg {
    width: 100%;
    max-height: 46px;
}

.tool:disabled {
    color: #bdbdbd;
}

.search {
    width: 361px;
    height: 31px;
    margin-left: auto;
    padding: 0 4px;
    border: 2px solid #b9b9c0;
    background-color: #fff;
}

.tools-help {
    gap: 16px;
    margin-left: 23px;
}

.tools-help .tool svg {
    height: 36px;
}

/* left side */
.workspace {
    display: flex;
    flex: 1;
    min-height: 0;
}

.side-tabs {
    position: relative;
    display: flex;
    flex-direction: column;
    width: 44px;
    border-right: 2px solid #d0d0d0;
    color: #444;
}

.side-tab {
    flex-direction: column;
    gap: 7px;
    padding: 18px 0 15px;
}

.side-tab.active {
    background-color: #cbcbcb;
    color: #000;
    font-weight: bold;
}

.side-tab.last {
    margin-top: auto;
    padding-bottom: 12px;
}

.side-label {
    margin-left: 4px;
    writing-mode: vertical-rl;
    transform: rotate(180deg);
}

.side-tab svg {
    width: 22px;
    height: 20px;
}

.side-tab svg.tall {
    width: 24px;
    height: 24px;
}

/* floating level gauge over the tabs */
.level {
    position: absolute;
    top: 77px;
    left: 2px;
    display: flex;
    align-items: flex-end;
    width: 13px;
    height: 76px;
    padding: 1px;
    border: 3px solid #6d6d6d;
    border-radius: 7px;
}

.level-fill {
    width: 5px;
    height: 57px;
    border-radius: 3px;
    background: linear-gradient(#ffa35a, #ff4040);
}

.network-panel {
    width: 690px;
    flex-shrink: 0;
    border-right: 8px solid #d0d0d0;
    background-color: #fff;
}

.panel-title {
    width: 100%;
    height: 35px;
    padding-left: 20px;
    border-bottom: 2px solid #d6d6d6;
    background-color: #efefef;
}

.panel-title.plain {
    width: auto;
    border: none;
}

.caret {
    margin-left: 11px;
    font-family: 'DejaVu Sans', sans-serif;
    font-size: 12px;
}

.ndex-search {
    display: flex;
    align-items: center;
    height: 55px;
    border-bottom: 2px solid #d6d6d6;
}

.ndex-logo {
    width: 48px;
    height: 40px;
}

.ndex-caret {
    width: 10px;
    height: 5px;
    margin: 8px 3px 0 5px;
}

.ndex-input {
    flex: 1;
    height: 44px;
    padding: 0 6px;
    border: none;
    border-left: 2px solid #d6d6d6;
}

.ndex-input::placeholder {
    color: #8c8c8c;
}

.network-info {
    display: flex;
    align-items: center;
    gap: 10px;
    height: 30px;
    padding-left: 16px;
    border-bottom: 2px solid #d6d6d6;
    background-color: #efefef;
}

.network-info svg {
    width: 15px;
    height: 15px;
}

.network-count {
    flex: 1;
    padding-left: 180px;
}

.tree-row {
    display: flex;
    align-items: center;
    height: 37px;
    padding-left: 16px;
}

.tree-chevron {
    width: 14px;
    height: 10px;
    margin-right: 17px;
}

.tree-row.selected {
    height: 33px;
    border-bottom: 2px solid #c8d4de;
    background-color: #cce8ff;
}

.dot {
    width: 13px;
    height: 13px;
    border-radius: 50%;
    background-color: #0078d7;
}

.edge-mark {
    margin-left: 22px;
}

.tree-icon {
    width: 22px;
    height: 22px;
    margin: 0 8px 0 2px;
}

/* network view */
.content {
    display: flex;
    flex-direction: column;
    flex: 1;
    min-width: 0;
}

.stage {
    position: relative;
    flex: 1;
    min-height: 0;
    background-color: #fff;
}

.graph {
    width: 100%;
    height: 100%;
}

.edges {
    fill: none;
    stroke: #8a8a8a;
    stroke-width: 5px;
}

.edges.thin {
    stroke-width: 2px;
}

.nodes {
    fill: #1b3440;
    font-family: 'Liberation Sans', sans-serif;
    font-size: 11px;
    text-anchor: middle;
}

.overview {
    position: absolute;
    right: 0;
    bottom: 0;
    width: 299px;
    height: 299px;
    border: 2px solid #0078d7;
}

.overview svg {
    width: 100%;
    height: 100%;
}

.overview::after {
    content: '';
    position: absolute;
    inset: 0;
    background-color: rgba(0, 120, 215, 0.235);
}

.view-bar {
    display: flex;
    align-items: center;
    height: 58px;
    flex-shrink: 0;
    padding: 0 15px;
    border-top: 2px solid #d6d6d6;
    border-bottom: 8px solid #d0d0d0;
}

.view-button {
    justify-content: center;
    width: 48px;
    height: 47px;
}

.view-button.details {
    margin-right: 10px;
}

.view-button svg {
    width: 32px;
    height: 30px;
}

.view-button svg.wide {
    width: 34px;
}

.view-button.pressed {
    border: 2px solid #b2b2b2;
    background-color: #cbcbcb;
}

.view-button.joined {
    border-left: none;
}

.bar-line {
    width: 2px;
    height: 46px;
    margin: 0 9px;
    background-color: #d6d6d6;
}

.bar-line.tight {
    margin: 0 6px 0 8px;
}

.bar-line.short {
    height: 30px;
    margin: 0 7px 0 9px;
}

.view-name {
    flex: 1;
}

.counts {
    display: flex;
    align-items: flex-start;
    justify-content: space-between;
    width: 96px;
    height: 42px;
    color: #777;
}

.counts svg {
    width: 19px;
    height: 14px;
    margin-top: 3px;
}

/* edge table */
.table-panel {
    display: flex;
    flex-direction: column;
    height: 217px;
    flex-shrink: 0;
    border-bottom: 2px solid #d0d0d0;
}

.table-title {
    display: flex;
    align-items: center;
    height: 35px;
    padding: 2px 17px 0 0;
    border-bottom: 2px solid #d6d6d6;
}

.table-title .panel-title {
    height: 31px;
    margin-right: auto;
}

.dock-button {
    margin-left: 15px;
}

.dock-button svg {
    width: 18px;
    height: 16px;
}

.table-tools {
    display: flex;
    align-items: center;
    gap: 22px;
    height: 55px;
    padding-left: 10px;
    border-bottom: 3px solid #d0d0d0;
}

.table-tool {
    justify-content: center;
    width: 33px;
    height: 40px;
}

.table-tool svg {
    width: 32px;
    height: 30px;
}

.table-tool.function {
    width: 87px;
    font-family: 'Liberation Serif', serif;
    font-size: 28px;
    font-style: italic;
}

.table-wrap {
    position: relative;
    flex: 1;
    overflow: hidden;
    background-color: #fff;
}

.edge-table {
    width: 100%;
    table-layout: fixed;
    border-collapse: collapse;
}

.c-corner { width: 30px; }
.c-shared-name { width: 225px; }
.c-shared-int { width: 288px; }
.c-name { width: 135px; }
.c-int { width: 198px; }
.c-gene1 { width: 149px; }
.c-gene2 { width: 176px; }
.c-score { width: 229px; }

.edge-table th,
.edge-table thead td {
    height: 46px;
    padding: 0;
}

.edge-table .corner {
    vertical-align: bottom;
}

.corner svg {
    width: 20px;
    height: 37px;
    margin: 0 0 3px 6px;
}

.head {
    display: flex;
    align-items: center;
    gap: 9px;
    height: 34px;
    padding-left: 10px;
    border-right: 2px solid #dcdcdc;
}

.head svg {
    width: 14px;
    height: 17px;
}

.head .tree {
    width: 18px;
}

.head span {
    margin-left: 15px;
}

.head .sort {
    width: 12px;
    height: 8px;
    margin-left: 15px;
}

.sorted {
    border-bottom: 2px solid #0078d7;
    background-color: #e5f1fb;
}

.edge-table tbody td {
    height: 24px;
    padding: 2px 10px 0;
    white-space: nowrap;
}

.edge-table td.edge-name {
    padding-left: 8px;
    border-left: 3px solid #0078d7;
    color: #444;
    font-family: 'Liberation Sans', sans-serif;
    font-size: 16px;
}

.edge-table td.handle {
    background: linear-gradient(#ccc, #ccc) 5px 100% / 17px 1px no-repeat;
}

.edge-table td.score {
    border-bottom: 1px solid #fff;
    background-color: #cce8ff;
    text-align: right;
}

.scroll-track {
    position: absolute;
    top: 46px;
    right: 2px;
    bottom: 0;
    width: 24px;
    padding: 26px 10px 0;
    background-color: #efefef;
}

.scroll-thumb {
    width: 4px;
    height: 17px;
    background-color: #8a8a8a;
}

/* bottom tabs and status */
.bottom-tabs {
    display: flex;
    height: 44px;
    flex-shrink: 0;
    border-bottom: 2px solid #d6d6d6;
    color: #444;
}

.bottom-tab {
    gap: 8px;
    padding: 3px 15px 0 17px;
}

.bottom-tab svg {
    width: 20px;
    height: 20px;
}

.bottom-tab.command {
    gap: 6px;
    margin-right: auto;
    padding-left: 57px;
}

.bottom-tab .console {
    width: 24px;
}

.bottom-tab.active {
    background-color: #cbcbcb;
    color: #000;
}

.statusbar {
    display: flex;
    align-items: center;
    gap: 12px;
    height: 48px;
    flex-shrink: 0;
    padding: 2px 17px 0;
}

.status-button {
    justify-content: center;
    width: 69px;
    height: 30px;
    border: 2px solid #d6d6d6;
    border-radius: 6px;
    background-color: #fff;
}

.status-button svg {
    width: 24px;
    height: 19px;
}

.status-button.right {
    width: 65px;
    margin-left: auto;
}

/* taskbar */
.taskbar {
    display: grid;
    grid-template-columns: 1fr auto 1fr;
    height: 73px;
    flex-shrink: 0;
    border-top: 3px solid #c9cbc8;
    background-color: #dadcd8;
    font-family: 'Open Sans', 'Noto Sans CJK SC', sans-serif;
}

.weather {
    display: flex;
    align-items: center;
    gap: 11px;
    padding-left: 30px;
}

.sun {
    width: 36px;
    height: 32px;
}

.weather-text,
.clock {
    display: flex;
    flex-direction: column;
    font-size: 17px;
    line-height: 24px;
}

.weather-sky {
    color: #555;
    font-size: 18px;
}

.apps {
    display: flex;
    align-items: center;
    padding-left: 2px;
}

.app {
    position: relative;
    justify-content: center;
    width: 60px;
    height: 60px;
    margin: 0 3px;
    border-radius: 6px;
}

.app svg {
    width: 36px;
    height: 36px;
}

.app-text {
    fill: #fff;
    font-family: 'Noto Sans CJK SC', sans-serif;
    font-size: 19px;
    text-anchor: middle;
}

.app.running::after,
.app.current::after {
    content: '';
    position: absolute;
    bottom: 1px;
    left: 50%;
    width: 8px;
    height: 5px;
    margin-left: -4px;
    border-radius: 3px;
    background-color: #7b7d7a;
}

.app.wechat {
    border-right: 7px double #fce4e6;
    background-color: #fce4e6;
    background-clip: padding-box;
}

.app.wechat::after {
    background-color: #c42b1c;
}

.app.current {
    border: 1px solid #d0d2ce;
    background-color: #eff0ee;
}

.app.current::after {
    width: 24px;
    margin-left: -12px;
    background-color: #0078d7;
}

.find {
    justify-content: center;
    gap: 10px;
    width: 147px;
    height: 46px;
    margin: 0 6px;
    border: 1px solid #cdcfcb;
    border-radius: 23px;
    background-color: #f4f5f3;
    font-size: 22px;
}

.find svg {
    width: 20px;
    height: 20px;
}

.tray {
    display: flex;
    align-items: center;
    justify-content: flex-end;
    gap: 15px;
    padding-right: 30px;
}

.tray svg {
    width: 20px;
    height: 24px;
}

.tray svg.wide {
    width: 24px;
}

.tray svg + svg.wide {
    margin-right: -3px;
}

.ime {
    margin-left: 5px;
    font-size: 22px;
}

.tray .wifi {
    margin-left: 12px;
}

.clock {
    width: 83px;
    text-align: right;
}

.badge {
    width: 24px;
    height: 24px;
    margin-left: -3px;
    border-radius: 50%;
    background-color: #0078d7;
    color: #fff;
    font-size: 16px;
    line-height: 24px;
    text-align: center;
}
```
